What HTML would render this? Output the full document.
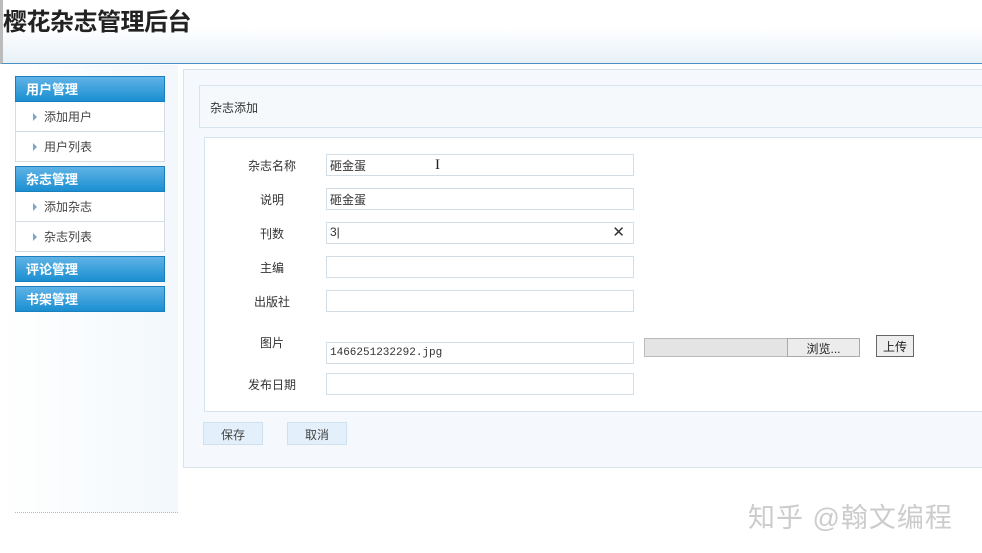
<!DOCTYPE html>
<html><head><meta charset="utf-8"><style>
*{margin:0;padding:0;box-sizing:border-box}
body{width:982px;height:553px;overflow:hidden;background:#fff;font-family:"Liberation Sans","Noto Sans CJK SC",sans-serif;font-size:12px;color:#333;position:relative}
.abs{position:absolute}
.hd{left:0;top:0;width:982px;height:64px;background:linear-gradient(#fff 0,#fff 28px,#e6f0f8 64px);border-bottom:1px solid #4a90c4;border-left:3px solid #bbb}
.hd h1{position:absolute;left:0px;top:2px;font-size:24px;font-weight:bold;color:#222;letter-spacing:-0.5px}
.side{left:0;top:65px;width:178px;height:448px;background:linear-gradient(90deg,#fff,#f3f8fc)}
.dot{left:15px;top:512px;width:163px;border-top:1px dotted #bbb}
.mh{left:15px;width:150px;height:26px;background:linear-gradient(#5fb3e6,#1b8fd1);border:1px solid #1a7fbf;color:#fff;font-weight:bold;font-size:13px;padding:3px 0 0 10px;line-height:20px}
.mi{left:15px;width:150px;height:30px;background:#fff;border:1px solid #d4dde5;border-top:none;padding:6px 0 0 28px;color:#444}
.mi:before{content:"";position:absolute;left:17px;top:11px;border-left:4px solid #7aa7c7;border-top:4px solid transparent;border-bottom:4px solid transparent}
.main{left:183px;top:69px;width:800px;height:399px;background:#f5f9fd;border:1px solid #d6e4ee}
.tb{left:199px;top:85px;width:784px;height:43px;background:#f6f9fc;border:1px solid #d6e4ee;padding:13px 0 0 10px}
.fb{left:204px;top:137px;width:779px;height:275px;background:#fff;border:1px solid #d6e4ee}
.lb{width:100px;left:222px;text-align:center;color:#333}
.in{left:326px;width:308px;height:22px;border:1px solid #d3dde6;background:#fff;padding:2px 0 0 3px;font-size:12px}
.btn{top:422px;width:60px;height:23px;background:#e3f0fb;border:1px solid #cfe0ee;text-align:center;padding-top:3px;color:#444}
</style></head><body>
<div class="abs hd"><h1>樱花杂志管理后台</h1></div>
<div class="abs side"></div>
<div class="abs dot"></div>
<div class="abs mh" style="top:76px">用户管理</div>
<div class="abs mi" style="top:102px">添加用户</div>
<div class="abs mi" style="top:132px">用户列表</div>
<div class="abs mh" style="top:166px">杂志管理</div>
<div class="abs mi" style="top:192px">添加杂志</div>
<div class="abs mi" style="top:222px">杂志列表</div>
<div class="abs mh" style="top:256px">评论管理</div>
<div class="abs mh" style="top:286px">书架管理</div>
<div class="abs main"></div>
<div class="abs tb">杂志添加</div>
<div class="abs fb"></div>
<div class="abs lb" style="top:157px">杂志名称</div>
<div class="abs in" style="top:154px">砸金蛋</div>
<div class="abs" style="left:435px;top:157px;font-size:15px;color:#222;font-family:'Liberation Serif',serif">I</div>
<div class="abs lb" style="top:191px">说明</div>
<div class="abs in" style="top:188px">砸金蛋</div>
<div class="abs lb" style="top:225px">刊数</div>
<div class="abs in" style="top:222px">3|<span style="position:absolute;right:8px;top:0px;font-size:15px;color:#333">✕</span></div>
<div class="abs lb" style="top:259px">主编</div>
<div class="abs in" style="top:256px"></div>
<div class="abs lb" style="top:293px">出版社</div>
<div class="abs in" style="top:290px"></div>
<div class="abs lb" style="top:334px">图片</div>
<div class="abs in" style="top:342px;font-family:'Liberation Mono',monospace;font-size:11px;padding-top:4px">1466251232292.jpg</div>
<div class="abs" style="left:644px;top:338px;width:216px;height:19px;background:#e4e4e4;border:1px solid #bbb"></div>
<div class="abs" style="left:787px;top:338px;width:73px;height:19px;background:#ececec;border:1px solid #aaa;text-align:center;padding-top:1px;color:#222">浏览...</div>
<div class="abs" style="left:876px;top:335px;width:38px;height:22px;background:#eee;border:1px solid #666;text-align:center;padding-top:2px;color:#222">上传</div>
<div class="abs lb" style="top:376px">发布日期</div>
<div class="abs in" style="top:373px"></div>
<div class="abs btn" style="left:203px">保存</div>
<div class="abs btn" style="left:287px">取消</div>
<div class="abs" style="left:748px;top:496px;font-size:27px;color:#ccc;letter-spacing:1px">知乎 @翰文编程</div>
</body></html>
